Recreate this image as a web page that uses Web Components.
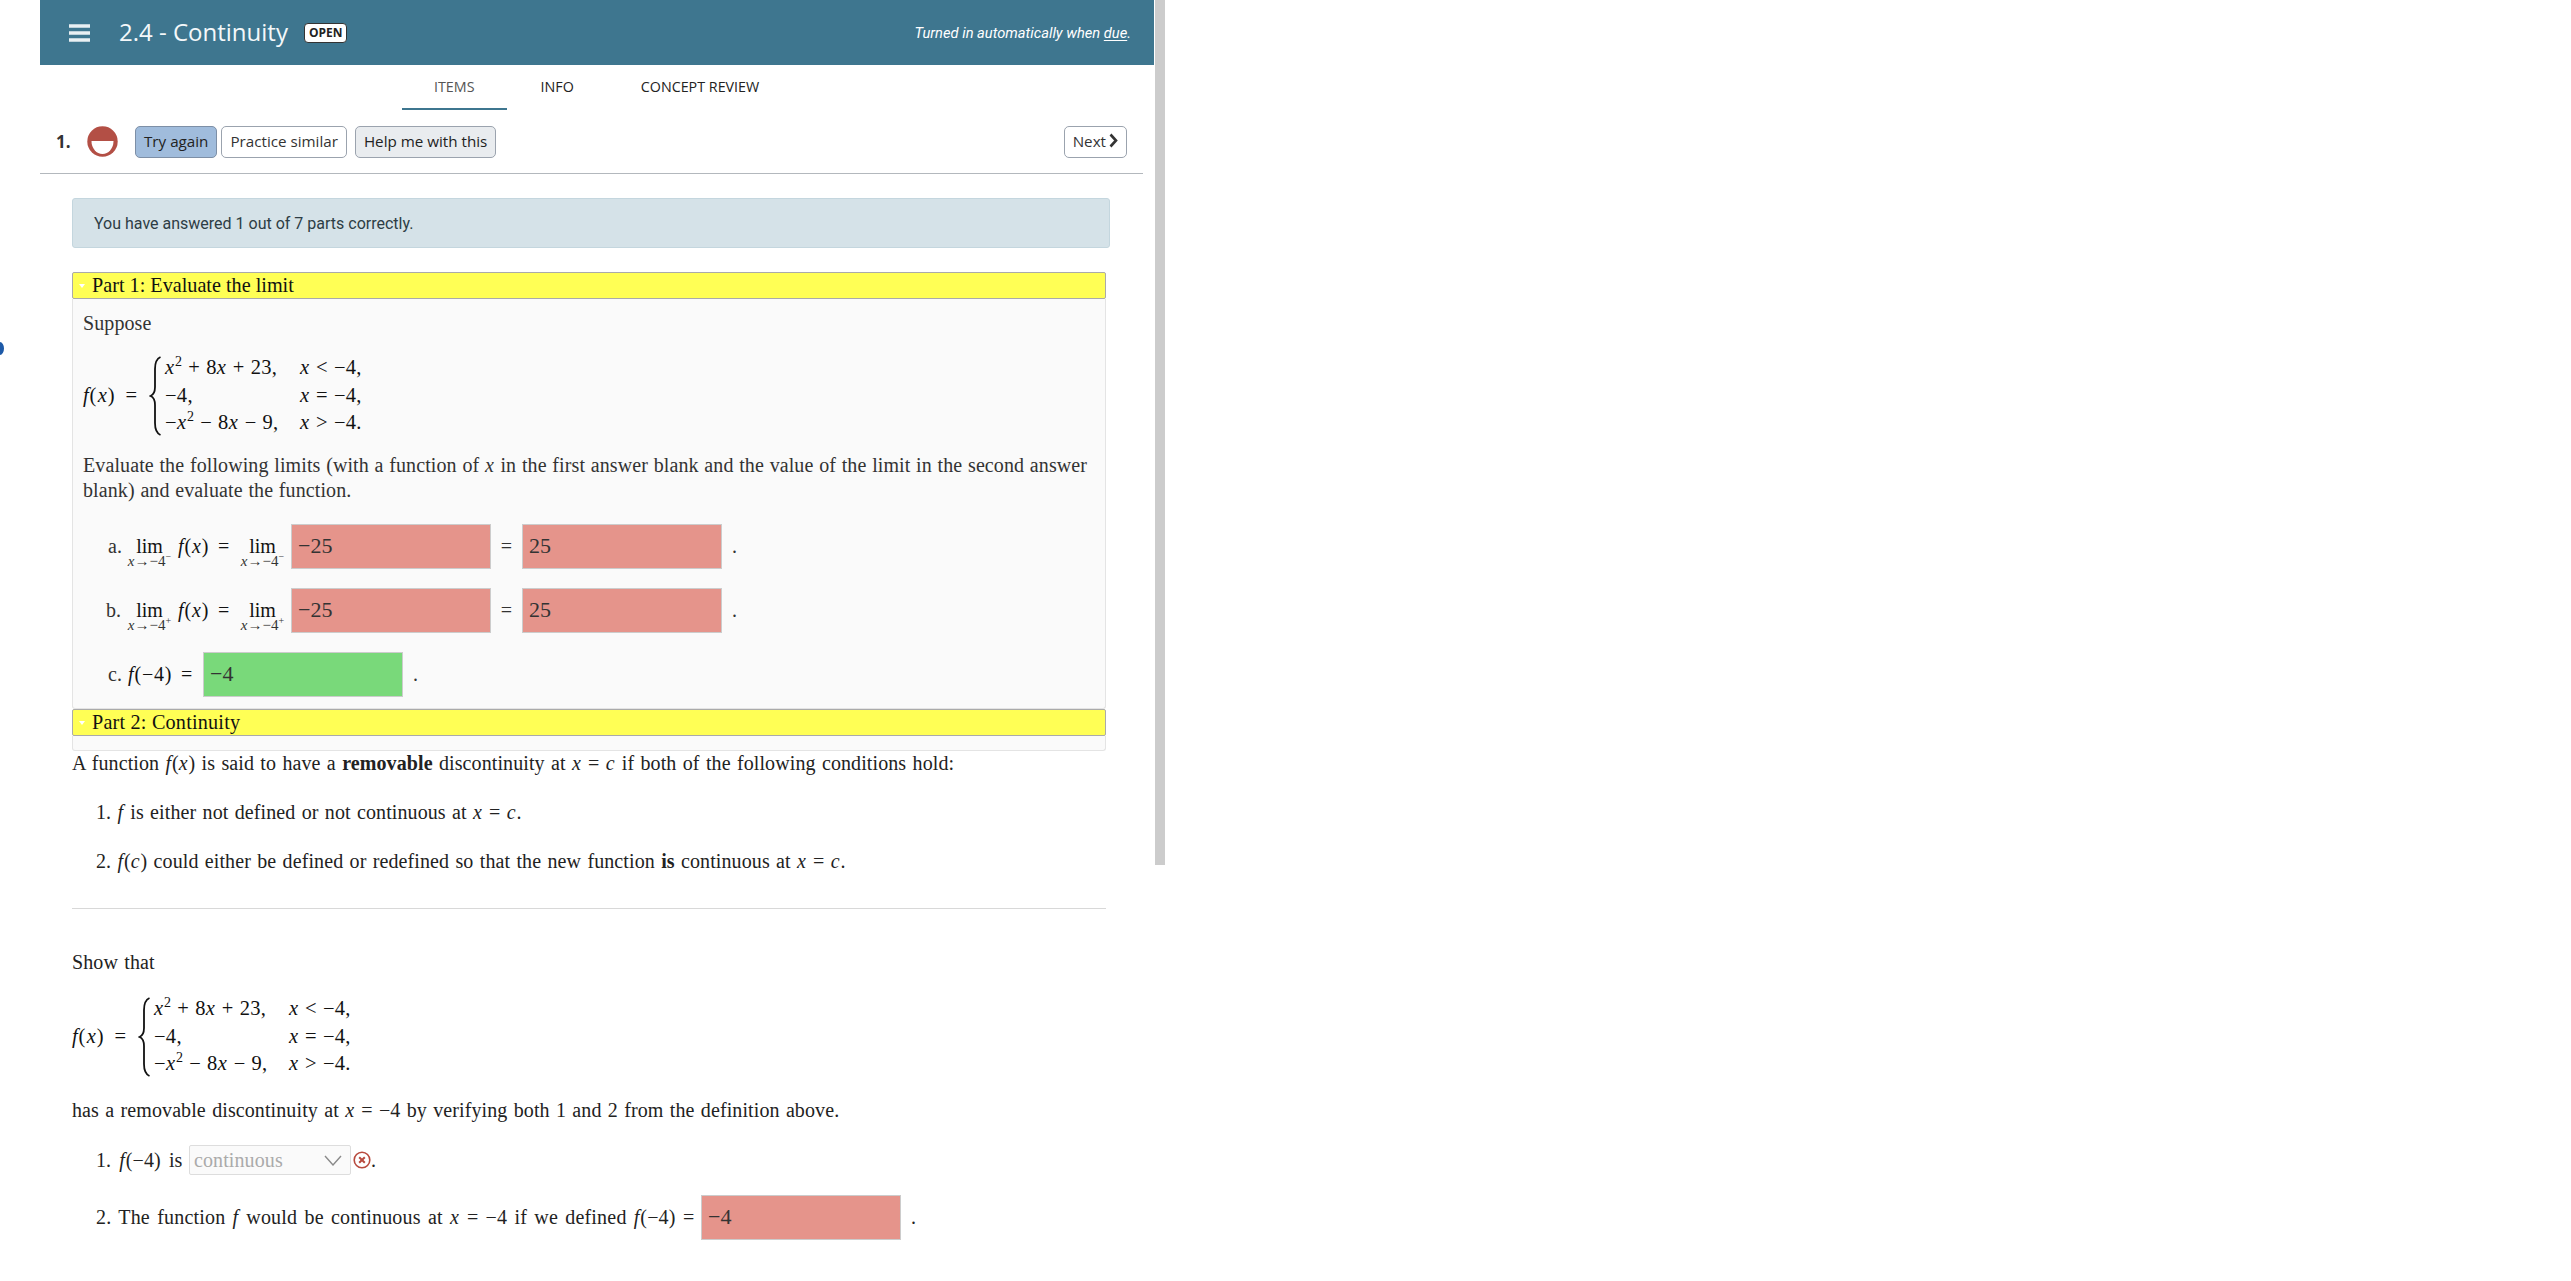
<!doctype html>
<html lang="en">
  <head>
    <meta charset="UTF-8">
    <title>2.4 - Continuity</title>
    <style>
      body { margin: 0; background: #fff; color: #333; font: 20px/27px "Liberation Serif", serif; word-spacing: 1.2px; letter-spacing: .1px; }
      i.m { font-style: italic; letter-spacing: .9px; }
      b { font-weight: bold; color: #222; }
      sup.s { font-size: 14px; line-height: 0; }
    </style>
  </head>
  <body>
    <template id="quiz-shell">
      <style>
        :host { display: flex; position: relative; padding-left: 40px; min-height: 1281px; box-sizing: border-box; }
        main { width: 1114px; margin-right: 1px; flex: none; }
        .scrollbar { width: 10px; height: 865px; background: #ccc; flex: none; }
        .dot { position: absolute; left: -4px; top: 342px; width: 8px; height: 13px; border-radius: 50%; background: #1e5aa8; }
      </style>
      <div class="dot"></div>
      <main><slot></slot></main>
      <div class="scrollbar"></div>
    </template>

    <template id="quiz-header">
      <style>
        :host { display: flex; align-items: center; height: 65px; padding: 0 23px 0 29px; background: #3e768f; color: #fff; font-family: "Open Sans", sans-serif; word-spacing: 0; letter-spacing: 0; }
        svg { width: 21px; height: 18px; margin-right: 29px; }
        h1 { margin: 0 0 2px; font-size: 24px; line-height: 63px; font-weight: 400; color: #f4f8fa; }
        .badge { margin-left: 16px; height: 18px; padding: 0 4px; border: 1px solid #333; border-radius: 4px; background: #fff; color: #222; font-size: 12px; font-weight: 700; line-height: 18px; }
        .due { margin-left: auto; font: italic 14.7px Roboto, sans-serif; }
        u { text-underline-offset: 2px; }
      </style>
      <svg viewBox="0 0 21 18"><path d="M0 2h21M0 9h21M0 16h21" stroke="#e9f0f3" stroke-width="3.4"/></svg>
      <h1>2.4 - Continuity</h1>
      <span class="badge">OPEN</span>
      <span class="due">Turned in automatically when <u>due</u>.</span>
    </template>

    <template id="quiz-tabs">
      <style>
        :host { display: flex; gap: 2px; height: 45px; padding-left: 362px; font: 14.3px/44px "Open Sans", sans-serif; color: #222; box-sizing: border-box; word-spacing: 0; letter-spacing: 0; }
        span { padding: 0 32px; height: 45px; box-sizing: border-box; }
        .on { color: #555; border-bottom: 2px solid #3e768f; }
        .last { margin-left: 1px; }
      </style>
      <span class="on">ITEMS</span><span>INFO</span><span class="last">CONCEPT REVIEW</span>
    </template>

    <template id="question-bar">
      <style>
        :host { display: flex; align-items: center; height: 63px; margin-right: 11px; padding: 0 16px; border-bottom: 1px solid #b3b8bd; font: 15.2px "Open Sans", sans-serif; color: #333; word-spacing: 0; letter-spacing: 0; }
        .n { font-size: 17px; font-weight: 700; width: 31px; }
        svg { width: 31px; height: 31px; margin-right: 17px; }
        button { font: inherit; height: 32px; padding: 0 8px 2px; border: 1px solid #9ba3ae; border-radius: 5px; background: #fff; color: #333; margin-right: 4px; }
        .try { background: #a0bcdc; color: #222; border-color: #7d8fa6; }
        .help { background: #e9ecef; margin-left: 4px; color: #222; }
        .next { margin-left: auto; margin-right: 0; display: flex; align-items: center; gap: 3px; }
        .next svg { width: 9px; height: 15px; margin: 0; }
      </style>
      <span class="n">1.</span>
      <svg viewBox="0 0 31 31"><circle cx="15.5" cy="15.5" r="15.2" fill="#b34f45"/><path d="M4.5 15H26.5A11 13 0 0 1 4.5 15Z" fill="#fff"/></svg>
      <button class="try">Try again</button>
      <button>Practice similar</button>
      <button class="help">Help me with this</button>
      <button class="next">Next <svg viewBox="0 0 9 15"><path d="M1.5 1.5 7 7.5 1.5 13.5" fill="none" stroke="#333" stroke-width="2.6"/></svg></button>
    </template>

    <template id="alert-box">
      <style>
        :host { display: flex; align-items: center; margin: 24px 43px 24px 32px; height: 50px; padding-left: 21px; background: #d5e2e8; border: 1px solid #c4d6de; border-radius: 3px; box-sizing: border-box; font: 16px Roboto, sans-serif; color: #2d3d45; word-spacing: 0; letter-spacing: 0; }
      </style>
      <slot></slot>
    </template>

    <template id="part-panel">
      <style>
        :host { display: block; width: 1034px; margin-left: 32px; }
        .head { position: relative; height: 27px; box-sizing: border-box; padding-left: 19px; background: #ffff55; border: 1px solid #aaa; border-radius: 2px; color: #111; font-size: 20.2px; line-height: 24px; word-spacing: 0; letter-spacing: 0; }
        .head::before { content: ""; position: absolute; left: 6px; top: 11px; border: 3.5px solid transparent; border-top: 4px solid #fff; border-bottom: 0; }
        .body { background: #fafafa; border: 1px solid #e4e4e4; border-top: 0; border-radius: 0 0 3px 3px; box-sizing: border-box; }
      </style>
      <div class="head"><slot name="title"></slot></div>
      <div class="body"><slot></slot></div>
    </template>

    <template id="text-block">
      <style>
        :host { display: block; }
      </style>
      <slot></slot>
    </template>

    <template id="math-cases">
      <style>
        :host { display: flex; align-items: center; height: 81px; font-size: 20.5px; letter-spacing: .3px; word-spacing: .6px; color: #111; }
        svg { width: 13px; height: 80px; margin: 0 3px 0 9px; flex: none; }
        .rows { display: grid; grid-template-columns: 135px auto; grid-auto-rows: 27.5px; line-height: 27px; }
        ::slotted([slot=lhs]) { width: 57px; letter-spacing: 1.4px; word-spacing: 3px; }
        ::slotted(span) { white-space: nowrap; }
      </style>
      <slot name="lhs"></slot>
      <svg viewBox="0 0 13 80"><path d="M11.5 1C7 3 6 7 6 13V31C6 36 4 39 1.5 40 4 41 6 44 6 49V67C6 73 7 77 11.5 79" fill="none" stroke="#111" stroke-width="1.8"/></svg>
      <div class="rows"><slot></slot></div>
    </template>

    <template id="lim-op">
      <style>
        :host { display: inline-flex; flex-direction: column; align-items: center; width: 45px; height: 27px; color: #111; letter-spacing: 0; word-spacing: 0; }
        .sub { font-size: 15px; line-height: 13px; margin-top: -5px; white-space: nowrap; color: #333; }
        sup { font-size: 10px; line-height: 0; }
      </style>
      <span>lim</span>
      <span class="sub"><i>x</i>→−4<sup id="side"></sup></span>
    </template>

    <template id="answer-blank">
      <style>
        :host { display: inline-flex; flex: none; align-items: center; box-sizing: border-box; width: 200px; height: 45px; padding: 0 0 2px 6px; border: 1.5px solid #ccc; background: #e5948b; font-size: 22px; color: #333; }
        :host([state=ok]) { background: #79d97a; }
      </style>
      <slot></slot>
    </template>

    <template id="answer-row">
      <style>
        :host { display: flex; align-items: baseline; white-space: nowrap; }
        ::slotted(.w) { flex: none; }
        ::slotted(.fx) { flex: none; letter-spacing: .8px; word-spacing: 3px; color: #111; }
        ::slotted(.eq) { flex: none; width: 31px; text-align: center; }
        ::slotted(.dot) { margin-left: 10px; }
      </style>
      <slot></slot>
    </template>

    <template id="select-box">
      <style>
        :host { display: inline-flex; flex: none; align-items: center; box-sizing: border-box; width: 162px; height: 30px; padding: 0 8px 0 4px; justify-content: space-between; border: 1.5px solid #ddd; border-radius: 2px; background: #fafafa; color: #aaa; }
        svg { width: 18px; height: 11px; }
      </style>
      <slot></slot>
      <svg viewBox="0 0 18 11"><path d="M1 1 9 10 17 1" fill="none" stroke="#8a8a8a" stroke-width="1.4"/></svg>
    </template>

    <template id="error-mark">
      <style>
        :host { display: inline-block; width: 18px; height: 18px; align-self: center; }
        svg { display: block; }
      </style>
      <svg viewBox="0 0 18 18" width="18" height="18"><circle cx="9" cy="9" r="7.8" fill="none" stroke="#b84a3e" stroke-width="1.6"/><path d="M6.2 6.2 11.8 11.8M11.8 6.2 6.2 11.8" stroke="#b84a3e" stroke-width="2"/></svg>
    </template>

    <quiz-shell>
      <quiz-header></quiz-header>
      <quiz-tabs></quiz-tabs>
      <question-bar></question-bar>
      <alert-box style="margin-right:44px">You have answered 1 out of 7 parts correctly.</alert-box>

      <part-panel>
        <span slot="title">Part 1: Evaluate the limit</span>
        <text-block style="padding:11px 0 11px 10px">
          <div>Suppose</div>
          <math-cases style="margin-top:18px">
            <span slot="lhs"><i class="m">f</i>(<i class="m">x</i>) =</span>
            <span><i class="m">x</i><sup class="s">2</sup> + 8<i class="m">x</i> + 23,</span><span><i class="m">x</i> &lt; −4,</span>
            <span>−4,</span><span><i class="m">x</i> = −4,</span>
            <span>−<i class="m">x</i><sup class="s">2</sup> − 8<i class="m">x</i> − 9,</span><span><i class="m">x</i> &gt; −4.</span>
          </math-cases>
          <div style="line-height:25px;margin-top:17px;word-spacing:.6px">Evaluate the following limits (with a function of <i class="m">x</i> in the first answer blank and the value of the limit in the second answer<br>blank) and evaluate the function.</div>
          <answer-row style="margin:21px 0 0 25px"><span class="w" style="width:19px">a.</span><lim-op side="−"></lim-op><span class="fx" style="width:55px;margin-left:6px"><i class="m">f</i>(<i class="m">x</i>) =</span><lim-op side="−" style="margin:0 6px 0 7px"></lim-op><answer-blank>−25</answer-blank><span class="eq">=</span><answer-blank>25</answer-blank><span class="dot">.</span></answer-row>
          <answer-row style="margin:19px 0 0 23px"><span class="w" style="width:21px">b.</span><lim-op side="+"></lim-op><span class="fx" style="width:55px;margin-left:6px"><i class="m">f</i>(<i class="m">x</i>) =</span><lim-op side="+" style="margin:0 6px 0 7px"></lim-op><answer-blank>−25</answer-blank><span class="eq">=</span><answer-blank>25</answer-blank><span class="dot">.</span></answer-row>
          <answer-row style="margin:19px 0 0 25px"><span class="w" style="width:20px">c.</span><span class="fx" style="width:75px"><i class="m">f</i>(−4) =</span><answer-blank state="ok">−4</answer-blank><span class="dot">.</span></answer-row>
        </text-block>
      </part-panel>

      <part-panel>
        <span slot="title" style="letter-spacing:.2px">Part 2: Continuity</span>
        <div style="height:14px"></div>
      </part-panel>

      <text-block style="margin:-1px 0 0 32px;width:1034px;color:#222">
        <div>A function <i class="m">f</i>(<i class="m">x</i>) is said to have a <b>removable</b> discontinuity at <i class="m">x</i> = <i class="m">c</i> if both of the following conditions hold:</div>
        <div style="margin:22px 0 0 24px">1. <i class="m">f</i> is either not defined or not continuous at <i class="m">x</i> = <i class="m">c</i>.</div>
        <div style="margin:22px 0 0 24px">2. <i class="m">f</i>(<i class="m">c</i>) could either be defined or redefined so that the new function <b>is</b> continuous at <i class="m">x</i> = <i class="m">c</i>.</div>
        <div style="margin-top:33px;height:1px;background:#d8d8d8"></div>
        <div style="margin-top:40px">Show that</div>
        <math-cases style="margin-top:20px">
          <span slot="lhs"><i class="m">f</i>(<i class="m">x</i>) =</span>
          <span><i class="m">x</i><sup class="s">2</sup> + 8<i class="m">x</i> + 23,</span><span><i class="m">x</i> &lt; −4,</span>
          <span>−4,</span><span><i class="m">x</i> = −4,</span>
          <span>−<i class="m">x</i><sup class="s">2</sup> − 8<i class="m">x</i> − 9,</span><span><i class="m">x</i> &gt; −4.</span>
        </math-cases>
        <div style="margin-top:20px">has a removable discontinuity at <i class="m">x</i> = −4 by verifying both 1 and 2 from the definition above.</div>
        <answer-row style="margin:21px 0 0 24px"><span class="w" style="width:93px;word-spacing:3px">1. <i class="m">f</i>(−4) is</span><select-box>continuous</select-box><error-mark style="margin-left:2px"></error-mark><span>.</span></answer-row>
        <answer-row style="margin:20px 0 0 24px"><span class="w" style="width:605px;word-spacing:2px;letter-spacing:.2px">2. The function <i class="m">f</i> would be continuous at <i class="m">x</i> = −4 if we defined <i class="m">f</i>(−4) =</span><answer-blank>−4</answer-blank><span class="dot">.</span></answer-row>
      </text-block>
    </quiz-shell>

    <script>
      class TemplateElement extends HTMLElement {
        constructor() {
          super()
          const template = document.getElementById(this.localName)
          this.attachShadow({mode: "open"}).append(template.content.cloneNode(true))
        }
      }
      ;["quiz-shell", "quiz-header", "quiz-tabs", "question-bar", "alert-box", "part-panel", "text-block",
        "math-cases", "answer-blank", "answer-row", "select-box", "error-mark"].forEach(name =>
        customElements.define(name, class extends TemplateElement {}))

      class LimOp extends TemplateElement {
        connectedCallback() {
          this.shadowRoot.getElementById("side").textContent = this.getAttribute("side")
        }
      }
      customElements.define("lim-op", LimOp)
    </script>
  </body>
</html>
